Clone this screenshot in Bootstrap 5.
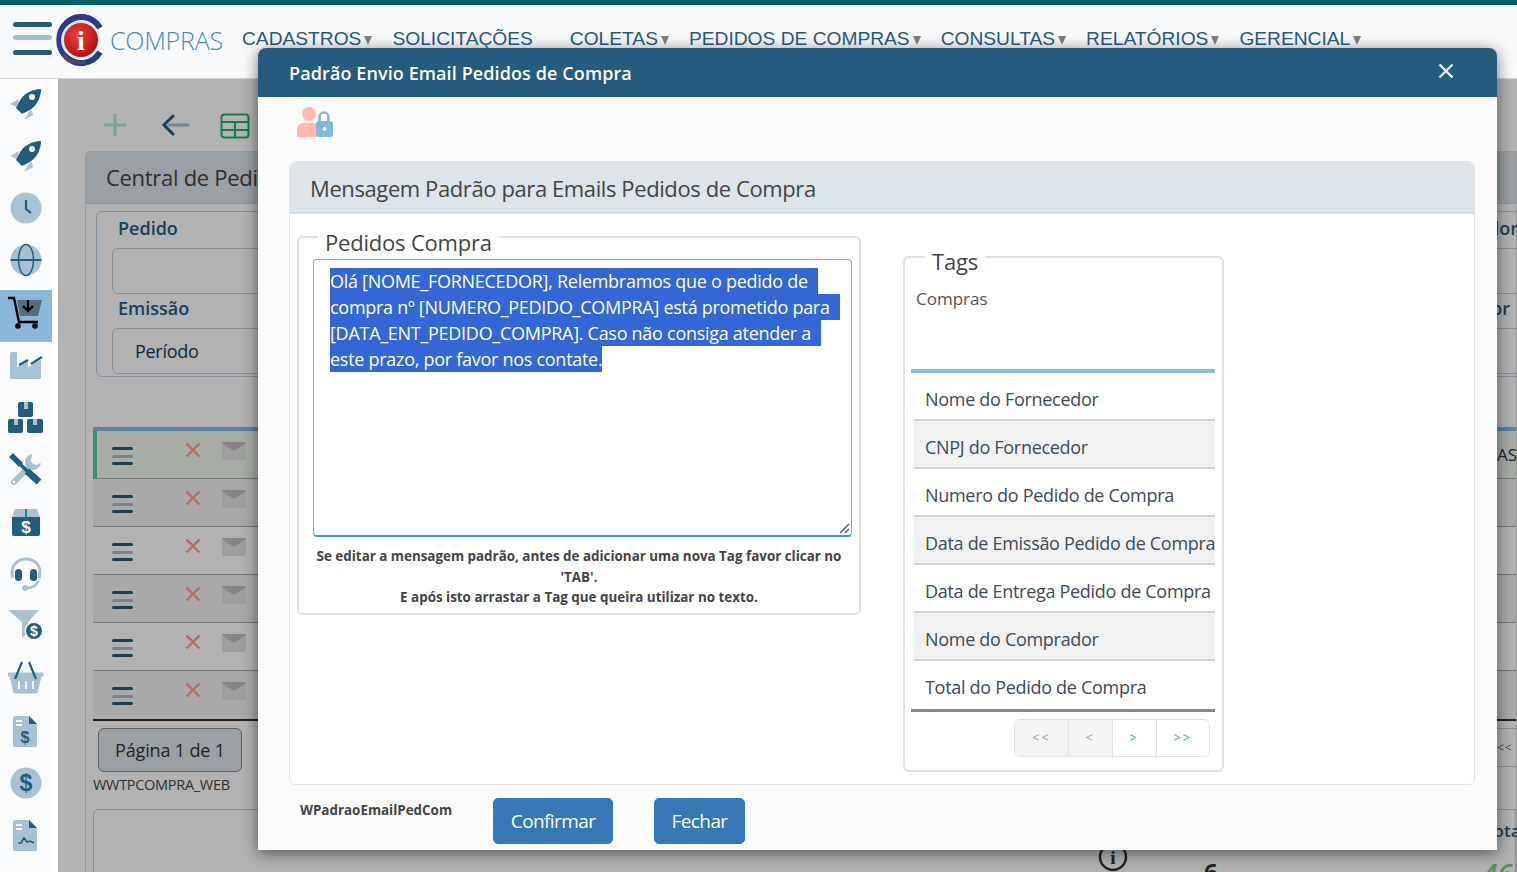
<!DOCTYPE html>
<html lang="pt-BR">
<head>
<meta charset="utf-8">
<title>Padrão Envio Email Pedidos de Compra</title>
<link rel="stylesheet" href="https://cdn.jsdelivr.net/npm/bootstrap@5.3.0/dist/css/bootstrap.min.css">
<style>
html,body{height:100%;overflow:hidden;background:#fff}
body{font-family:"Open Sans","Noto Sans",sans-serif;color:#444}
.app-shell{height:872px;width:1517px;overflow:hidden}
.top-strip{height:5px;background:#055f63;flex:none}
.app-head{height:74px;background:#f9fafc;flex:none;padding-left:13px;border-bottom:1px solid #d0d0d0}
.burger{width:39px;flex:none;margin-top:-6px}
.burger i{display:block;height:5px;border-radius:3px;background:#245c7d;margin-bottom:8px}
.burger i:nth-child(2){background:#a6bfd0;margin-bottom:10px}
.burger i:last-child{margin-bottom:0}
.logo-svg{margin:-4px 0 0 3px;flex:none}
.app-name{font-size:25px;font-weight:300;color:#3b8fc4;margin-left:7px;width:132px;flex:none;letter-spacing:-.2px;margin-top:-1px}
.top-menu{font-family:"Liberation Sans",Arial,sans-serif;font-size:19.2px;color:#245c7d;margin-top:-4px;white-space:nowrap}
.top-menu span{display:flex;align-items:center;margin-right:20px}
.top-menu span::after{content:"";margin-left:3px;border-style:solid;border-width:9px 4.5px 0;border-color:#808080 transparent transparent;margin-top:2px}
.top-menu span.no-caret{margin-right:26px}
.top-menu span.no-caret::after{border-color:transparent}
.side-rail{width:58px;flex:none;background:#f9fbfd;border-right:6px solid #fff;padding-top:3px}
.side-item{width:52px;height:52px;padding:5px 0 0 8px}
.side-item.on{background:#8ab8d8}
.side-item svg{display:block}
.main-area{flex:1 1 auto;background:#fff;min-width:0}
.veil{position:absolute;inset:0;background:rgba(0,0,0,.3)}
.tool-row{height:72px;padding:34px 0 0 45px}
.tool-row svg{display:block}
.tool-plus{margin-right:34px}
.tool-table{margin-left:29px}
.order-box{margin-left:27px;border:1px solid #ddd;border-radius:6px 0 0 0;height:730px}
.order-head{height:52px;background:#dde5ea;border-bottom:1px solid #c9d6e4;font-size:22px;color:#444;padding-left:20px;line-height:51px;font-weight:500;letter-spacing:-.3px}
.filter-box{margin:7px -20px 0 10px;border:1px solid #bcd0e6;border-radius:6px;height:166px;padding:0 0 0 15px}
.filter-label{font-size:18px;font-weight:600;color:#245c7d;height:36px;line-height:32px;padding-left:6px}
.filter-label.second{height:34px;line-height:28px}
.filter-input{height:46px;border:1px solid #ccc;border-radius:6px;font-size:18px;color:#12395c;padding-left:22px;line-height:44px;letter-spacing:-.3px}
.filter-right{width:280px;flex:none;margin-left:12px;text-align:right}
.filter-right .second{padding-right:25px}
.filter-right .first-r{padding-right:17px}
.grid-wrap{margin:50px 0 0 7px;border-top:4px solid #80bce4;border-bottom:2px solid #333}
.grid-line{height:48px;border-bottom:1px solid #aaa;padding-left:19px;padding-top:16px;background:#fff}
.grid-line:last-child{border-bottom:0}
.grid-line.alt{background:#f2f2f2}
.grid-line.sel{background:#ecf8ed;border-left:4px solid #53ce95;padding-left:15px}
.g-bars{width:21px;flex:none}
.g-bars i{display:block;height:3px;border-radius:2px;background:#245c7d;margin-bottom:4.5px}
.g-bars i:nth-child(2){background:#a6bfd0}
.g-x{margin:-5px 0 0 52px;flex:none}
.g-mail{margin:-5px 0 0 21px;flex:none}
.g-text{margin-left:1251px;margin-top:-5px;font-size:17px;white-space:nowrap;color:#333;flex:none}
.grid-foot{height:52px;padding:7px 0 0 0;margin-left:7px}
.page-chip{width:144px;height:44px;margin-left:5px;flex:none;border:1px solid #888;border-radius:6px;background:#dde5ea;font-size:18px;line-height:42px;text-align:center;color:#333;letter-spacing:-.15px}
.far-pager{margin-left:1255px;height:39px;flex:none;border-top:1px solid #ccc;border-bottom:1px solid #ccc;width:100px;font-size:12px;color:#777;line-height:37px;letter-spacing:1px}
.prog-name{font-size:14.5px;color:#444;margin-left:7px;line-height:20px;margin-top:2px;letter-spacing:-.3px}
.sum-box{margin:14px 0 0 7px;border:1px solid #ccc;border-radius:6px 0 0 0;height:120px}
.sum-title{margin:9px 0 0 1390px;font-size:17px;font-weight:600;color:#245c7d;line-height:24px;white-space:nowrap}
.sum-line{margin:-2px 0 0 1004px;height:40px;padding-top:1px}
.sum-six{font-size:24px;font-weight:700;color:#333;margin:15px 0 0 76px;line-height:30px}
.sum-green{font-size:28px;font-weight:600;font-style:italic;color:#7ecb7e;margin:15px 0 0 264px;line-height:34px}

.dlg{position:absolute;left:258px;top:48px;width:1239px;height:802px}
.dlg .modal-content{height:100%;border:0;border-radius:8px 8px 0 0;background:#fbfbfb;box-shadow:0 3px 16px rgba(0,0,0,.55)}
.dlg .modal-header{height:49px;flex:none;background:#245c7d;border:0;border-radius:8px 8px 0 0;padding:0 43px 0 31px}
.dlg .modal-title{font-size:18px;font-weight:600;color:#fff;line-height:51px;letter-spacing:.1px;margin:2px 0 0}
.x-btn{background:none;border:0;padding:0;line-height:0;margin-top:-3px}
.dlg .modal-body{padding:0 22px 0 31px;flex:none;height:688px}
.dlg-tools{height:64px;padding:10px 0 0 8px}
.dlg .card{height:624px;border:1px solid #e4e4e4;border-radius:6px;background:#fff}
.dlg .card-header{height:52px;background:#dde5ea;border:0;border-bottom:2px solid #d2deea;padding:0 0 0 20px;font-size:22px;line-height:53px;color:#444;border-radius:6px 6px 0 0;letter-spacing:-.4px}
.dlg .card-body{padding:0;height:570px}
.set-a,.set-b{border:2px solid #e2e2e2;border-radius:6px;flex:none;background:#fff}
.set-a{margin:22px 0 0 7px;width:564px;height:379px}
.set-b{margin:42px 0 0 42px;width:321px;height:516px}
.set-cap{display:block;width:fit-content;background:#fff;font-size:22px;line-height:28px;color:#444;padding:0 7px;margin:-10px 0 0 19px;letter-spacing:-.2px}
.set-b .set-cap{margin:-11px 0 0 20px;font-weight:500}
.msg-area{position:relative;margin:3px 0 0 14px;width:539px;height:278px;border:1px solid #7fb3d5;border-bottom:2px solid #3c96e8;border-radius:4px;padding:8px 0 0 16px;font-size:18px;line-height:26px}
.msg-area b{display:block;width:fit-content;font-weight:400;background:#3367d6;color:#fff;padding-right:10px;white-space:nowrap;letter-spacing:-.28px}
.msg-area b:last-of-type{padding-right:0}
.grip{position:absolute;right:1px;bottom:1px}
.msg-hint{margin-top:9px;font-size:13.4px;font-weight:700;line-height:20.5px;text-align:center;color:#444;white-space:nowrap}
.tag-cat{font-size:17px;color:#555;padding-left:11px;margin-top:12px;line-height:24px;height:24px}
.tag-list{margin:58px 0 0 6px;width:304px;border-top:4px solid #85bbdd;border-bottom:3px solid #888;border-radius:0}
.tag-list .list-group-item{height:48px;margin-left:3px;border:0;border-bottom:2px solid #d2d2d2;border-radius:0;padding:6px 0 0 11px;display:flex;align-items:center;background:#fff;font-size:18px;color:#3c4a5a;white-space:nowrap;letter-spacing:-.3px}
.tag-list .list-group-item:nth-child(even){background:#f2f2f2}
.tag-list .list-group-item:last-child{border-bottom:0;height:48px;padding-top:4px}
.tag-pager{margin:7px 0 0 109px;width:196px;height:38px;border:1px solid #e2e2e2;border-radius:6px;overflow:hidden;font-size:12px;line-height:36px;text-align:center;color:#3b8fc4;letter-spacing:2.5px}
.tag-pager span{border-right:1px solid #e2e2e2;width:44px}
.tag-pager span:first-child{width:54px}
.tag-pager span:last-child{border-right:0;flex:1}
.tag-pager span.off{background:#f5f5f5;color:#999}
.dlg .modal-footer{display:flex;flex-wrap:nowrap;justify-content:flex-start;align-items:flex-start;gap:41px;border:0;padding:13px 0 0 42px;height:65px;background:#fbfbfb}
.dlg .modal-footer>*{margin:0}
.prog-tag{font-size:13.4px;font-weight:700;color:#444;line-height:18px;margin-top:3px!important;white-space:nowrap}
.btn-blue{background:#3578b5;border:1px solid #3578b5;color:#fff;font-size:19px;height:46px;border-radius:5px;padding:1px 0 0;letter-spacing:-.6px}
.btn-blue:hover{background:#3578b5;color:#fff}
.w120{width:120px}.w91{width:91px}
</style>
</head>
<body>
<div class="app-shell d-flex flex-column position-relative">
  <div class="top-strip"></div>
  <header class="app-head d-flex align-items-center">
    <div class="burger"><i></i><i></i><i></i></div>
    <svg class="logo-svg" width="48" height="52" viewBox="0 0 48 52" aria-hidden="true">
      <defs>
        <radialGradient id="ball" cx=".4" cy=".35" r=".75"><stop offset="0" stop-color="#e8403a"/><stop offset=".6" stop-color="#c8201f"/><stop offset="1" stop-color="#8f1512"/></radialGradient>
      </defs>
      <path d="M45 14 A22 23 0 1 0 45 38" fill="none" stroke="#2a3a8f" stroke-width="6"/>
      <path d="M8 41 A22 23 0 0 0 30 48" fill="none" stroke="#4a4f5c" stroke-width="3"/>
      <circle cx="25" cy="26" r="19" fill="#dfe3ea"/>
      <circle cx="26" cy="26" r="17" fill="url(#ball)"/>
      <text x="26" y="36" text-anchor="middle" font-family="Liberation Serif,serif" font-weight="700" font-size="28" fill="#fff">i</text>
    </svg>
    <div class="app-name">COMPRAS</div>
    <nav class="top-menu d-flex">
      <span>CADASTROS</span><span class="no-caret">SOLICITAÇÕES</span><span>COLETAS</span><span>PEDIDOS DE COMPRAS</span><span>CONSULTAS</span><span>RELATÓRIOS</span><span>GERENCIAL</span>
    </nav>
  </header>
  <div class="d-flex flex-grow-1" style="min-height:0">
    <aside class="side-rail">
      <div class="side-item"><svg width="36" height="36" viewBox="0 0 36 36"><path d="M11 12 2 17l7 3zM23 22l-7 11 9-5z" fill="#a9c2d3"/><path d="M33 2C24 2 15 7 11 15l-3 6 6 6 6-3C28 20 33 11 33 2z" fill="#245c7d"/><circle cx="24" cy="10" r="3" fill="#f9fbfd"/></svg></div>
      <div class="side-item"><svg width="36" height="36" viewBox="0 0 36 36"><path d="M11 12 2 17l7 3zM23 22l-7 11 9-5z" fill="#a9c2d3"/><path d="M33 2C24 2 15 7 11 15l-3 6 6 6 6-3C28 20 33 11 33 2z" fill="#245c7d"/><circle cx="24" cy="10" r="3" fill="#f9fbfd"/></svg></div>
      <div class="side-item"><svg width="36" height="36" viewBox="0 1 36 36"><circle cx="18" cy="18" r="15.5" fill="#a9c2d3"/><path d="M18 10v9l5 4" fill="none" stroke="#245c7d" stroke-width="2.2"/></svg></div>
      <div class="side-item"><svg width="36" height="36" viewBox="0 1 36 36"><circle cx="18" cy="18" r="15.5" fill="#a9c2d3"/><ellipse cx="18" cy="18" rx="7.5" ry="15.5" fill="none" stroke="#245c7d" stroke-width="1.5"/><path d="M2.5 18h31" stroke="#245c7d" stroke-width="2"/></svg></div>
      <div class="side-item on"><svg width="36" height="36" viewBox="0 0 36 36"><path d="M9 5h25l-4 16H12z" fill="#566f80"/><path d="M0 3h6l5 24h19" fill="none" stroke="#000" stroke-width="2.4"/><path d="M20 5v10M15 11l5 5 5-5" fill="none" stroke="#000" stroke-width="2.4"/><circle cx="10" cy="31" r="2.8"/><circle cx="27" cy="31" r="2.8"/></svg></div>
      <div class="side-item"><svg width="36" height="36" viewBox="0 0 36 36"><path d="M2 7q0-2 2-2h5v15l11-6v6l13-7v17q0 2-2 2H4q-2 0-2-2z" fill="#a9c2d3"/><path d="M11 18l9-5M23 17l11-7" stroke="#245c7d" stroke-width="2.4"/></svg></div>
      <div class="side-item"><svg width="36" height="36" viewBox="0 0 36 36"><rect x="10" y="3" width="15" height="15" rx="2" fill="#245c7d"/><rect x="0" y="20" width="15" height="14" rx="2" fill="#245c7d"/><rect x="19" y="20" width="16" height="14" rx="2" fill="#245c7d"/><path d="M16 3h4v7h-4zM6 20h4v6H6zM25 20h4v6h-4z" fill="#a9c2d3"/></svg></div>
      <div class="side-item"><svg width="36" height="36" viewBox="0 0 36 36"><path d="M6 31 22 15" stroke="#a9c2d3" stroke-width="6" stroke-linecap="round"/><path d="M24 3a8 8 0 1 0 9 9l-5 2-3-1-2-3z" fill="#a9c2d3"/><circle cx="6" cy="31" r="1.200" fill="#f9fbfd"/><path d="M3 4l10 10" stroke="#245c7d" stroke-width="5.500"/><path d="M13 14l7 7" stroke="#245c7d" stroke-width="3.500"/><path d="M19 20l12 11" stroke="#245c7d" stroke-width="7"/></svg></div>
      <div class="side-item"><svg width="36" height="36" viewBox="0 -2 36 36"><path d="M7 4h22l3 8H4z" fill="#a9c2d3"/><path d="M4 12h28v17q0 2-2 2H6q-2 0-2-2z" fill="#245c7d"/><path d="M18 4v9" stroke="#245c7d" stroke-width="1.500"/><text x="18" y="28" text-anchor="middle" font-family="Liberation Sans,sans-serif" font-weight="700" font-size="17" fill="#fff">$</text></svg></div>
      <div class="side-item"><svg width="36" height="36" viewBox="0 -1 36 36"><path d="M5 22C1 8 11 3 18 3s17 5 13 19" fill="none" stroke="#a9c2d3" stroke-width="3"/><rect x="7" y="13" width="7" height="12" rx="3.500" fill="#245c7d"/><rect x="22" y="13" width="7" height="12" rx="3.500" fill="#245c7d"/><path d="M30 25q-2 7-12 7" fill="none" stroke="#a9c2d3" stroke-width="2.500"/><circle cx="17" cy="32" r="3" fill="#a9c2d3"/></svg></div>
      <div class="side-item"><svg width="36" height="36" viewBox="0 0 36 36"><path d="M0 3h31L20 15v10l-6 6V15z" fill="#a9c2d3"/><circle cx="26" cy="24" r="9.500" fill="#f9fbfd"/><circle cx="26" cy="24" r="8" fill="#245c7d"/><text x="26" y="29" text-anchor="middle" font-family="Liberation Sans,sans-serif" font-weight="700" font-size="14" fill="#fff">$</text></svg></div>
      <div class="side-item"><svg width="36" height="36" viewBox="0 -1 36 36"><path d="M0 13h35v3h-2l-4 17H6L2 16H0z" fill="#a9c2d3" stroke="#a9c2d3" stroke-linejoin="round"/><path d="M14 2 7 19M21 2l7 17" stroke="#245c7d" stroke-width="2.200"/><path d="M11 21v8M18 21v8M25 21v8" stroke="#f9fbfd" stroke-width="2"/></svg></div>
      <div class="side-item"><svg width="36" height="36" viewBox="0 -2 36 36"><path d="M5 5q0-2 2-2h14l8 8v21q0 2-2 2H7q-2 0-2-2z" fill="#a9c2d3"/><path d="M21 3l8 8h-8z" fill="#245c7d"/><path d="M8 8h6M8 12h6" stroke="#f9fbfd" stroke-width="2"/><text x="17" y="30" text-anchor="middle" font-family="Liberation Sans,sans-serif" font-weight="700" font-size="16" fill="#245c7d">$</text></svg></div>
      <div class="side-item"><svg width="36" height="36" viewBox="0 -2 36 36"><circle cx="18" cy="18" r="15.500" fill="#a9c2d3"/><text x="18" y="26" text-anchor="middle" font-family="Liberation Sans,sans-serif" font-weight="700" font-size="23" fill="#245c7d">$</text></svg></div>
      <div class="side-item"><svg width="36" height="36" viewBox="0 -2 36 36"><path d="M5 5q0-2 2-2h14l8 8v21q0 2-2 2H7q-2 0-2-2z" fill="#a9c2d3"/><path d="M21 3l8 8h-8z" fill="#245c7d"/><path d="M8 8h6M8 12h6" stroke="#f9fbfd" stroke-width="2"/><path d="M10 26h3l3-5 3 4 3-1 4 2" fill="none" stroke="#245c7d" stroke-width="1.600"/></svg></div>
    </aside>
    <main class="main-area position-relative">
      <div class="tool-row d-flex">
        <svg class="tool-plus" width="24" height="24" viewBox="0 0 24 24"><path d="M12 1v22M1 12h22" stroke="#aceed0" stroke-width="3"/></svg>
        <svg width="30" height="24" viewBox="0 0 30 24"><path d="M8 12h19" stroke="#a6bfd0" stroke-width="3" stroke-linecap="round"/><path d="M12 3l-9 9 9 9" fill="none" stroke="#245c7d" stroke-width="3" stroke-linecap="round"/></svg>
        <svg class="tool-table" width="30" height="26" viewBox="0 0 30 26"><rect x="1.500" y="1.500" width="27" height="23" rx="3" fill="none" stroke="#15b56e" stroke-width="2"/><path d="M2 9h26M2 17h26M15 9v16" stroke="#15b56e" stroke-width="2"/></svg>
      </div>
      <section class="order-box">
        <div class="order-head">Central de Pedidos</div>
        <div class="filter-box d-flex">
          <div class="flex-grow-1">
            <div class="filter-label">Pedido</div>
            <div class="filter-input"></div>
            <div class="filter-label second">Emissão</div>
            <div class="filter-input">Período</div>
          </div>
          <div class="filter-right">
            <div class="filter-label first-r">Valor</div>
            <div class="filter-input"></div>
            <div class="filter-label second">Fornecedor</div>
            <div class="filter-input"></div>
          </div>
        </div>
        <div class="grid-wrap">
          <div class="grid-line sel d-flex"><div class="g-bars"><i></i><i></i><i></i></div><svg class="g-x" width="16" height="16" viewBox="0 0 16 16"><path d="M1.500 1.500l13 13M14.500 1.500l-13 13" stroke="#fb9e8e" stroke-width="2.400"/></svg><svg class="g-mail" width="24" height="18" viewBox="0 0 24 18"><rect width="24" height="18" rx="2" fill="#e2e2e2"/><path d="M0 1q0-1 2-1h20q2 0 2 1L12 9z" fill="#bfbfbf"/></svg><div class="g-text">AS</div></div>
          <div class="grid-line alt d-flex"><div class="g-bars"><i></i><i></i><i></i></div><svg class="g-x" width="16" height="16" viewBox="0 0 16 16"><path d="M1.500 1.500l13 13M14.500 1.500l-13 13" stroke="#fb9e8e" stroke-width="2.400"/></svg><svg class="g-mail" width="24" height="18" viewBox="0 0 24 18"><rect width="24" height="18" rx="2" fill="#e2e2e2"/><path d="M0 1q0-1 2-1h20q2 0 2 1L12 9z" fill="#bfbfbf"/></svg></div>
          <div class="grid-line d-flex"><div class="g-bars"><i></i><i></i><i></i></div><svg class="g-x" width="16" height="16" viewBox="0 0 16 16"><path d="M1.500 1.500l13 13M14.500 1.500l-13 13" stroke="#fb9e8e" stroke-width="2.400"/></svg><svg class="g-mail" width="24" height="18" viewBox="0 0 24 18"><rect width="24" height="18" rx="2" fill="#e2e2e2"/><path d="M0 1q0-1 2-1h20q2 0 2 1L12 9z" fill="#bfbfbf"/></svg></div>
          <div class="grid-line alt d-flex"><div class="g-bars"><i></i><i></i><i></i></div><svg class="g-x" width="16" height="16" viewBox="0 0 16 16"><path d="M1.500 1.500l13 13M14.500 1.500l-13 13" stroke="#fb9e8e" stroke-width="2.400"/></svg><svg class="g-mail" width="24" height="18" viewBox="0 0 24 18"><rect width="24" height="18" rx="2" fill="#e2e2e2"/><path d="M0 1q0-1 2-1h20q2 0 2 1L12 9z" fill="#bfbfbf"/></svg></div>
          <div class="grid-line d-flex"><div class="g-bars"><i></i><i></i><i></i></div><svg class="g-x" width="16" height="16" viewBox="0 0 16 16"><path d="M1.500 1.500l13 13M14.500 1.500l-13 13" stroke="#fb9e8e" stroke-width="2.400"/></svg><svg class="g-mail" width="24" height="18" viewBox="0 0 24 18"><rect width="24" height="18" rx="2" fill="#e2e2e2"/><path d="M0 1q0-1 2-1h20q2 0 2 1L12 9z" fill="#bfbfbf"/></svg></div>
          <div class="grid-line alt d-flex"><div class="g-bars"><i></i><i></i><i></i></div><svg class="g-x" width="16" height="16" viewBox="0 0 16 16"><path d="M1.500 1.500l13 13M14.500 1.500l-13 13" stroke="#fb9e8e" stroke-width="2.400"/></svg><svg class="g-mail" width="24" height="18" viewBox="0 0 24 18"><rect width="24" height="18" rx="2" fill="#e2e2e2"/><path d="M0 1q0-1 2-1h20q2 0 2 1L12 9z" fill="#bfbfbf"/></svg></div>
        </div>
        <div class="grid-foot d-flex">
          <div class="page-chip">Página 1 de 1</div>
          <div class="far-pager">&lt;&lt;</div>
        </div>
        <div class="prog-name">WWTPCOMPRA_WEB</div>
        <div class="sum-box">
          <div class="sum-title">Total</div>
          <div class="sum-line d-flex">
            <svg width="30" height="30" viewBox="0 0 30 30" class="flex-none"><circle cx="15" cy="15" r="13" fill="none" stroke="#333" stroke-width="2.400"/><text x="15" y="22" text-anchor="middle" font-family="Liberation Serif,serif" font-weight="700" font-size="19" fill="#333">i</text></svg>
            <div class="sum-six">6</div>
            <div class="sum-green">46</div>
          </div>
        </div>
      </section>
      <div class="veil"></div>
    </main>
  </div>

  <div class="dlg">
    <div class="modal-content">
      <div class="modal-header d-flex justify-content-between align-items-center">
        <h1 class="modal-title">Padrão Envio Email Pedidos de Compra</h1>
        <button type="button" class="x-btn" aria-label="Fechar"><svg width="16" height="16" viewBox="0 0 16 16"><path d="M1.500 1.500l13 13M14.500 1.500l-13 13" stroke="#e8eff4" stroke-width="2.400"/></svg></button>
      </div>
      <div class="modal-body">
        <div class="dlg-tools">
          <svg width="36" height="30" viewBox="0 0 36 30" class="d-block"><circle cx="12" cy="7" r="7" fill="#ffb9ae"/><path d="M0 30v-7q0-7 7-7h10q3 0 3 2v12z" fill="#ffb9ae"/><path d="M22.500 15v-5a4.500 4.500 0 0 1 9 0v5" fill="none" stroke="#84b8d8" stroke-width="2.600"/><rect x="19" y="14" width="17" height="16" rx="3" fill="#84b8d8"/><circle cx="27.500" cy="22" r="2" fill="#fff"/></svg>
        </div>
        <div class="card">
          <div class="card-header">Mensagem Padrão para Emails Pedidos de Compra</div>
          <div class="card-body d-flex align-items-start">
            <div class="set-a">
              <div class="set-cap">Pedidos Compra</div>
              <div class="msg-area" role="textbox">
                <b>Olá [NOME_FORNECEDOR], Relembramos que o pedido de</b>
                <b>compra nº [NUMERO_PEDIDO_COMPRA] está prometido para</b>
                <b>[DATA_ENT_PEDIDO_COMPRA]. Caso não consiga atender a</b>
                <b>este prazo, por favor nos contate.</b>
                <svg class="grip" width="12" height="12" viewBox="0 0 12 12"><path d="M11 2 2 11M11 7l-4 4" stroke="#555" stroke-width="1.300"/></svg>
              </div>
              <div class="msg-hint">Se editar a mensagem padrão, antes de adicionar uma nova Tag favor clicar no<br>'TAB'.<br>E após isto arrastar a Tag que queira utilizar no texto.</div>
            </div>
            <div class="set-b">
              <div class="set-cap">Tags</div>
              <div class="tag-cat">Compras</div>
              <div class="tag-list list-group">
                <div class="list-group-item">Nome do Fornecedor</div>
                <div class="list-group-item">CNPJ do Fornecedor</div>
                <div class="list-group-item">Numero do Pedido de Compra</div>
                <div class="list-group-item">Data de Emissão Pedido de Compra</div>
                <div class="list-group-item">Data de Entrega Pedido de Compra</div>
                <div class="list-group-item">Nome do Comprador</div>
                <div class="list-group-item">Total do Pedido de Compra</div>
              </div>
              <div class="tag-pager d-flex">
                <span class="off">&lt;&lt;</span><span class="off">&lt;</span><span>&gt;</span><span>&gt;&gt;</span>
              </div>
            </div>
          </div>
        </div>
      </div>
      <div class="modal-footer">
        <div class="prog-tag">WPadraoEmailPedCom</div>
        <button type="button" class="btn btn-blue w120">Confirmar</button>
        <button type="button" class="btn btn-blue w91">Fechar</button>
      </div>
    </div>
  </div>
</div>
<script src="https://cdn.jsdelivr.net/npm/bootstrap@5.3.0/dist/js/bootstrap.bundle.min.js"></script>
</body>
</html>
